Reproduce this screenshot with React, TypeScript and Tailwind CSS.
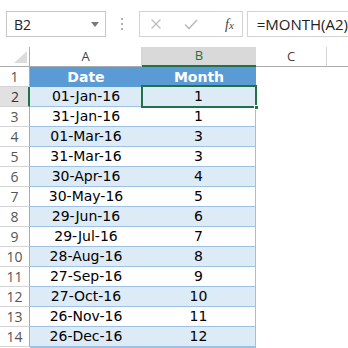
import React from "react";

const rows: [string, number][] = [
  ["01-Jan-16", 1],
  ["31-Jan-16", 1],
  ["01-Mar-16", 3],
  ["31-Mar-16", 3],
  ["30-Apr-16", 4],
  ["30-May-16", 5],
  ["29-Jun-16", 6],
  ["29-Jul-16", 7],
  ["28-Aug-16", 8],
  ["27-Sep-16", 9],
  ["27-Oct-16", 10],
  ["26-Nov-16", 11],
  ["26-Dec-16", 12],
];

const uiFont = { fontFamily: "'Open Sans', 'Liberation Sans', sans-serif" };
const cellFont = { fontFamily: "'DejaVu Sans', Verdana, sans-serif" };

function FormulaBar() {
  return (
    <div className="flex h-[47px] items-start pt-[11px] pl-[6px]" style={uiFont}>
      <div className="flex h-[26px] w-[102px] items-center justify-between border border-[#c6c6c6] pl-[7px] pr-[6px] text-[14px] text-[#222]">
        <span>B2</span>
        <svg width="8" height="5" viewBox="0 0 8 5">
          <path d="M0 0h8L4 5z" fill="#7a7a7a" />
        </svg>
      </div>
      <div className="flex h-[26px] w-[34px] flex-col items-center justify-center gap-[3px]">
        <span className="h-[2px] w-[2px] bg-[#b0b0b0]" />
        <span className="h-[2px] w-[2px] bg-[#b0b0b0]" />
        <span className="h-[2px] w-[2px] bg-[#b0b0b0]" />
      </div>
      <div className="flex h-[26px] w-[106px] items-center border border-[#d4d4d4] pl-[9px]">
        <svg width="12" height="12" viewBox="0 0 12 12" className="ml-[1px]">
          <path d="M1.5 1.5l9 9M10.5 1.5l-9 9" stroke="#bdbdbd" strokeWidth="1.3" />
        </svg>
        <svg width="14" height="12" viewBox="0 0 14 12" className="ml-[22px]">
          <path d="M1 6.5l4 4L13 2" stroke="#bdbdbd" strokeWidth="1.6" fill="none" />
        </svg>
        <span
          className="ml-[27px] text-[14px] italic text-[#444]"
          style={{ fontFamily: "'Liberation Serif', serif" }}
        >
          f<span className="text-[11px]">x</span>
        </span>
      </div>
      <div className="ml-[4px] flex h-[26px] flex-1 items-center border border-r-0 border-[#d4d4d4] pl-[9px] text-[15px] text-[#222]">
        =MONTH(A2)
      </div>
    </div>
  );
}

function ColumnHeaders() {
  return (
    <div className="flex h-[20px] text-[13px] text-[#444]" style={uiFont}>
      <div className="relative w-[30px] border-b border-r border-[#ababab] bg-white">
        <svg width="13" height="12" viewBox="0 0 13 12" className="absolute right-[2px] bottom-[3px]">
          <path d="M13 0V12H0z" fill="#dcdcdc" />
        </svg>
      </div>
      <div className="flex w-[112px] items-center justify-center border-b border-r border-[#d4d4d4] border-b-[#ababab]">
        A
      </div>
      <div className="flex w-[114px] items-center justify-center border-b-2 border-[#217346] bg-[#d9d9d9] text-[#217346]">
        B
      </div>
      <div className="flex w-[71px] items-center justify-center border-b border-r border-[#d4d4d4] border-b-[#ababab]">
        C
      </div>
      <div className="flex-1 border-b border-[#ababab]" />
    </div>
  );
}

function RowHeader({ n, active }: { n: number; active?: boolean }) {
  return (
    <div
      className={
        active
          ? "flex w-[30px] items-center justify-center border-b border-r-2 border-[#d4d4d4] border-r-[#217346] bg-[#e1e1e1] pl-[2px] text-[14px] text-[#333]"
          : "flex w-[30px] items-center justify-center border-b border-r border-[#d4d4d4] border-r-[#ababab] bg-white text-[14px] text-[#555]"
      }
      style={uiFont}
    >
      {n}
    </div>
  );
}

export default function App() {
  return (
    <div className="relative h-[348px] w-[348px] overflow-hidden bg-white">
      <FormulaBar />
      <ColumnHeaders />
      <div className="flex h-[20px]">
        <RowHeader n={1} />
        <div
          className="flex w-[226px] bg-[#5b9bd5] text-[14px] font-bold text-white"
          style={cellFont}
        >
          <div className="flex w-[112px] items-center justify-center">Date</div>
          <div className="flex w-[114px] items-center justify-center">Month</div>
        </div>
      </div>
      {rows.map(([date, month], i) => {
        const band = i % 2 === 0;
        return (
          <div key={i} className="flex h-[20px]">
            <RowHeader n={i + 2} active={i === 0} />
            <div
              className={
                band
                  ? "flex w-[226px] border-b border-r border-[#9bc2e6] bg-[#ddebf7] text-[14px] text-black"
                  : "flex w-[226px] border-b border-r border-[#9bc2e6] bg-white text-[14px] text-black"
              }
              style={cellFont}
            >
              <div className="flex w-[112px] items-center justify-center">{date}</div>
              <div className="flex flex-1 items-center justify-center">{month}</div>
            </div>
          </div>
        );
      })}
      <div className="ml-[30px] h-[2px] w-[226px] bg-[#9bc2e6]" />
      {/* selected cell B2 */}
      <div className="pointer-events-none absolute left-[141px] top-[85px] h-[23px] w-[116px] border-2 border-[#217346]" />
      <div className="absolute left-[254px] top-[105px] h-[5px] w-[5px] border border-white bg-[#217346]" />
    </div>
  );
}
